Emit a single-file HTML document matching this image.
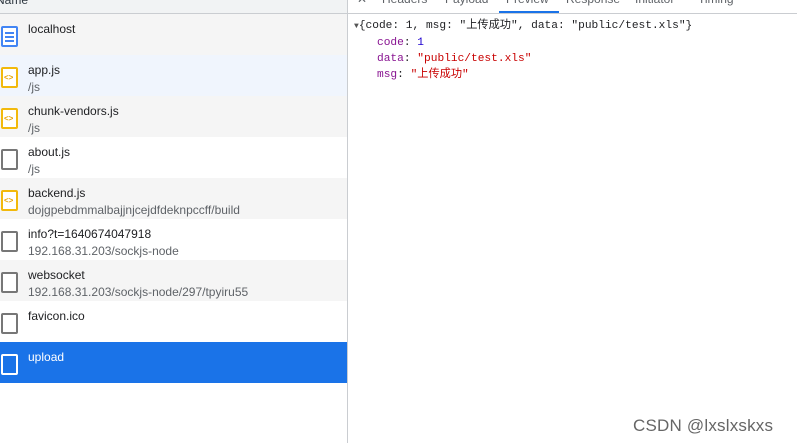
<!DOCTYPE html>
<html><head><meta charset="utf-8"><style>
*{margin:0;padding:0;box-sizing:border-box}
body{width:797px;height:443px;overflow:hidden;background:#fff;font-family:"Liberation Sans","Noto Sans CJK SC",sans-serif;font-size:12px;color:#202124;position:relative}
.left{position:absolute;left:0;top:0;width:347px;height:443px;background:#fff}
.hdr{position:absolute;left:0;top:0;width:347px;height:14px;background:#f1f3f4;border-bottom:1px solid #cacdd1;overflow:hidden}
.hdr span{position:absolute;left:-4px;top:-7px;color:#303942}
.row{position:absolute;left:0;width:347px;height:41px}
.row .ic{position:absolute;left:1px;top:12px;width:17px;height:21px;border:2px solid #777;border-radius:2px;background:#fff}
.row .n{position:absolute;left:28px;top:8px;white-space:nowrap;font-size:12px}
.row .s{position:absolute;left:28px;top:25px;color:#5f6368;white-space:nowrap;font-size:12px}
.js{border-color:#f2b90c!important}
.js:after{content:"<>";position:absolute;left:1px;top:4px;font-size:8px;font-weight:bold;color:#e8a200}
.doc{border-color:#4285f4!important}
.doc i{position:absolute;left:2px;width:9px;height:2px;background:#4285f4}
.right{position:absolute;left:347px;top:0;width:450px;height:443px;border-left:1px solid #cacdd1}
.tabs{position:absolute;left:0;top:0;width:450px;height:14px;border-bottom:1px solid #cacdd1;background:#fff;overflow:hidden}
.tabs span{position:absolute;top:-8px;color:#5f6368}
.ul{position:absolute;left:151px;top:11px;width:60px;height:2px;background:#1a73e8}
.code{position:absolute;left:8px;font-family:"Liberation Mono","Noto Sans CJK SC",monospace;font-size:11.2px;line-height:13px;height:13px;white-space:pre}
.k{color:#881391}.nm{color:#1c00cf}.st{color:#c80000}
.wm{position:absolute;left:633px;top:416px;font-size:17px;color:#666;letter-spacing:0.2px}
</style></head><body>
<div class="left">
<div class="hdr"><span>Name</span></div>
<div class="row" style="top:14px;background:#f5f5f5"><div class="ic doc"><i style="top:4px"></i><i style="top:8px"></i><i style="top:12px"></i></div><div class="n">localhost</div></div>
<div class="row" style="top:55px;background:#f0f5fd"><div class="ic js"></div><div class="n">app.js</div><div class="s">/js</div></div>
<div class="row" style="top:96px;background:#f5f5f5"><div class="ic js"></div><div class="n">chunk-vendors.js</div><div class="s">/js</div></div>
<div class="row" style="top:137px;background:#fff"><div class="ic"></div><div class="n">about.js</div><div class="s">/js</div></div>
<div class="row" style="top:178px;background:#f5f5f5"><div class="ic js"></div><div class="n">backend.js</div><div class="s">dojgpebdmmalbajjnjcejdfdeknpccff/build</div></div>
<div class="row" style="top:219px;background:#fff"><div class="ic"></div><div class="n">info?t=1640674047918</div><div class="s">192.168.31.203/sockjs-node</div></div>
<div class="row" style="top:260px;background:#f5f5f5"><div class="ic"></div><div class="n">websocket</div><div class="s">192.168.31.203/sockjs-node/297/tpyiru55</div></div>
<div class="row" style="top:301px;background:#fff"><div class="ic"></div><div class="n">favicon.ico</div></div>
<div class="row" style="top:342px;background:#1a73e8;color:#fff"><div class="ic" style="border-color:#fff;background:#1a73e8"></div><div class="n">upload</div></div>
</div>
<div class="right">
<div class="tabs"><span style="left:9px">✕</span><span style="left:34px">Headers</span><span style="left:97px">Payload</span><span style="left:158px">Preview</span><span style="left:218px">Response</span><span style="left:287px">Initiator</span><span style="left:350px">Timing</span><div class="ul"></div></div>
<div class="code" style="top:20px;left:6px"><span style="font-size:8px;color:#555">▼</span>{code: 1, msg: "上传成功", data: "public/test.xls"}</div>
<div class="code" style="top:37px;left:29px"><span class="k">code</span>: <span class="nm">1</span></div>
<div class="code" style="top:53px;left:29px"><span class="k">data</span>: <span class="st">"public/test.xls"</span></div>
<div class="code" style="top:69px;left:29px"><span class="k">msg</span>: <span class="st">"上传成功"</span></div>
</div>
<div class="wm">CSDN @lxslxskxs</div>
</body></html>
